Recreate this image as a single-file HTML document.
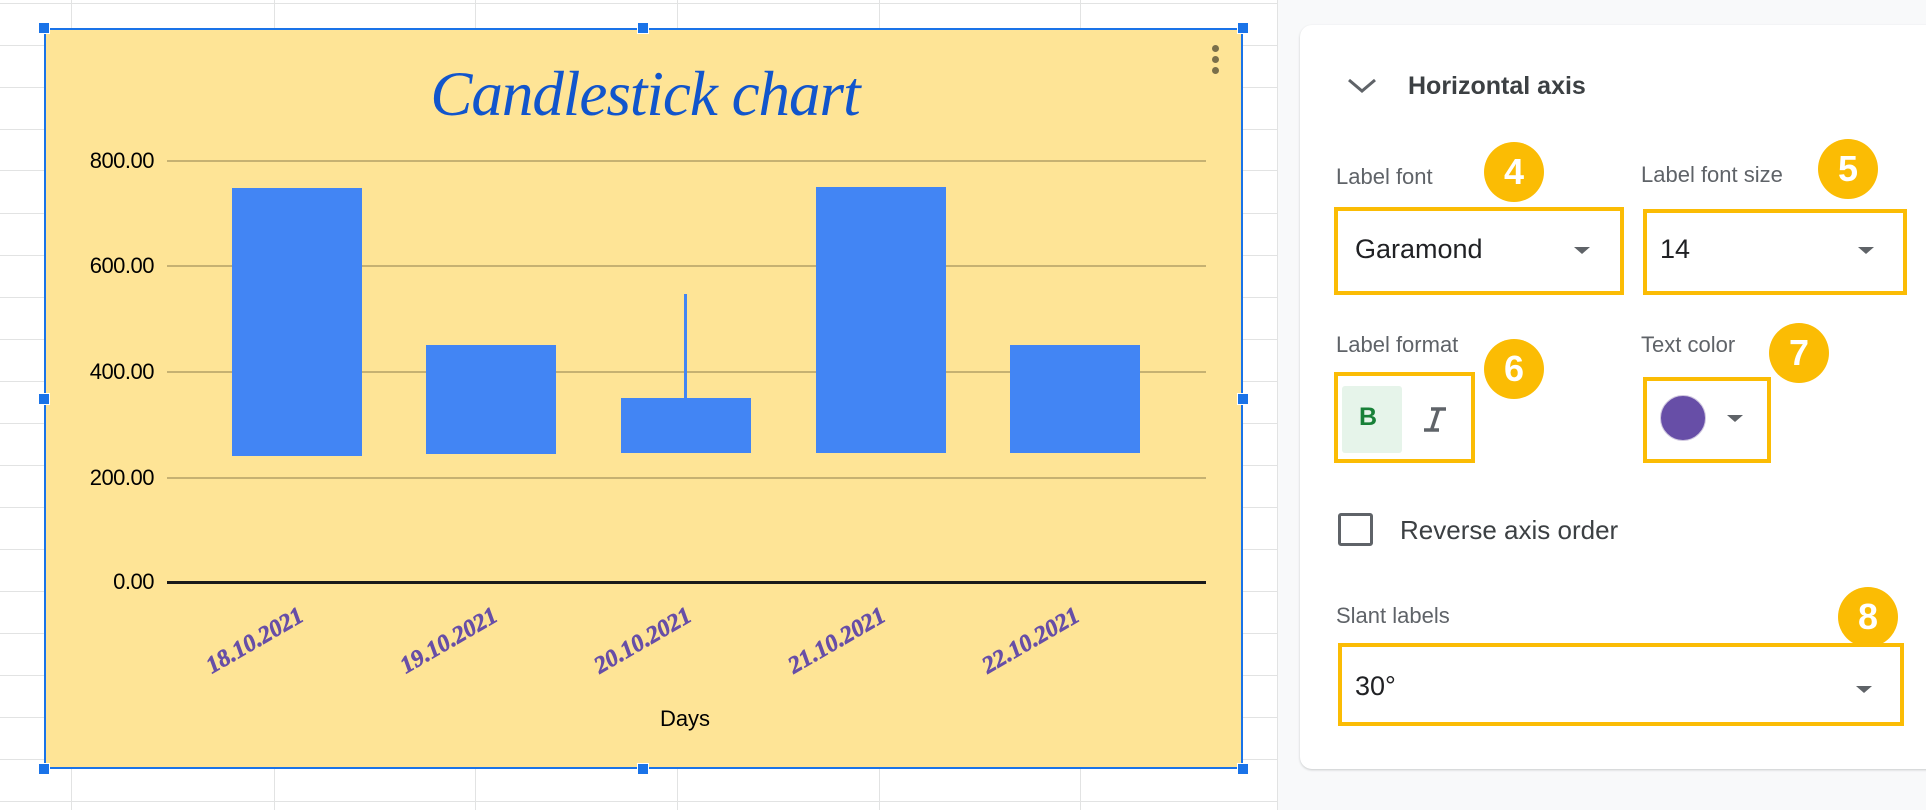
<!DOCTYPE html>
<html><head><meta charset="utf-8"><style>
body{margin:0;width:1926px;height:810px;position:relative;overflow:hidden;background:#fff;font-family:"Liberation Sans",Arial,sans-serif}
.a{position:absolute}
.vl{position:absolute;top:0;width:1px;height:810px;background:#e2e3e3}
.hl{position:absolute;left:0;width:1277px;height:1px;background:#e2e3e3}
.h{position:absolute;width:12px;height:12px;background:#1a73e8;border:1px solid #fff;box-sizing:border-box}
.g{position:absolute;left:167px;width:1039px;height:2px;background:#c6b172}
.yl{position:absolute;width:150px;left:4px;text-align:right;font-size:22px;color:#000;line-height:22px;letter-spacing:-0.5px}
.bar{position:absolute;background:#4285f4}
.xl{position:absolute;width:200px;text-align:center;font:italic 900 24px "Liberation Serif",serif;color:#674ea7;transform:rotate(-30deg);line-height:24px;-webkit-text-stroke:0.6px #674ea7}
.lab{position:absolute;font-size:22px;color:#5f6368}
.badge{position:absolute;width:60px;height:60px;border-radius:50%;background:#fbbc04;color:#fff;font-weight:bold;font-size:36px;text-align:center;line-height:60px}
.box{position:absolute;border:4px solid #fbbc04;box-sizing:border-box;background:#fff}
.arr{position:absolute;width:0;height:0;border-left:8px solid transparent;border-right:8px solid transparent;border-top:7px solid #5f6368}
</style></head><body>
<div class="vl" style="left:71px"></div><div class="vl" style="left:274px"></div><div class="vl" style="left:475px"></div><div class="vl" style="left:677px"></div><div class="vl" style="left:879px"></div><div class="vl" style="left:1080px"></div><div class="vl" style="left:1277px"></div>
<div class="hl" style="top:3px"></div><div class="hl" style="top:45px"></div><div class="hl" style="top:87px"></div><div class="hl" style="top:129px"></div><div class="hl" style="top:170px"></div><div class="hl" style="top:213px"></div><div class="hl" style="top:255px"></div><div class="hl" style="top:297px"></div><div class="hl" style="top:339px"></div><div class="hl" style="top:381px"></div><div class="hl" style="top:423px"></div><div class="hl" style="top:465px"></div><div class="hl" style="top:507px"></div><div class="hl" style="top:549px"></div><div class="hl" style="top:591px"></div><div class="hl" style="top:633px"></div><div class="hl" style="top:675px"></div><div class="hl" style="top:717px"></div><div class="hl" style="top:759px"></div><div class="hl" style="top:801px"></div>
<div class="a" style="left:1278px;top:0;width:648px;height:810px;background:#f8f9fa"></div>
<div class="a" style="left:1300px;top:25px;width:640px;height:744px;background:#fff;border-radius:12px;box-shadow:0 1px 2px rgba(60,64,67,.25)"></div>

<div class="a" style="left:44px;top:28px;width:1199px;height:741px;background:#fee496;border:2px solid #1a73e8;box-sizing:border-box"></div>
<div class="h" style="left:38px;top:22px"></div><div class="h" style="left:637px;top:22px"></div><div class="h" style="left:1237px;top:22px"></div>
<div class="h" style="left:38px;top:393px"></div><div class="h" style="left:1237px;top:393px"></div>
<div class="h" style="left:38px;top:763px"></div><div class="h" style="left:637px;top:763px"></div><div class="h" style="left:1237px;top:763px"></div>
<div class="a" style="left:1212px;top:45px;width:7px;height:7px;border-radius:50%;background:#7a6f4a"></div>
<div class="a" style="left:1212px;top:56px;width:7px;height:7px;border-radius:50%;background:#7a6f4a"></div>
<div class="a" style="left:1212px;top:67px;width:7px;height:7px;border-radius:50%;background:#7a6f4a"></div>

<div class="a" style="left:290px;top:54px;width:710px;text-align:center;font:italic 63px 'Liberation Serif',serif;color:#1155cc;letter-spacing:-1px;line-height:80px">Candlestick chart</div>
<div class="g" style="top:160px"></div><div class="g" style="top:265px"></div><div class="g" style="top:371px"></div><div class="g" style="top:477px"></div>
<div class="a" style="left:167px;top:581px;width:1039px;height:3px;background:#1a1a1a"></div>
<div class="yl" style="top:150px">800.00</div><div class="yl" style="top:255px">600.00</div><div class="yl" style="top:361px">400.00</div><div class="yl" style="top:467px">200.00</div><div class="yl" style="top:571px">0.00</div>
<div class="bar" style="left:232px;top:188px;width:130px;height:268px"></div>
<div class="bar" style="left:426px;top:345px;width:130px;height:109px"></div>
<div class="bar" style="left:684px;top:294px;width:3px;height:106px"></div>
<div class="bar" style="left:621px;top:398px;width:130px;height:55px"></div>
<div class="bar" style="left:816px;top:187px;width:130px;height:266px"></div>
<div class="bar" style="left:1010px;top:345px;width:130px;height:108px"></div>
<div class="xl" style="left:155px;top:629px">18.10.2021</div>
<div class="xl" style="left:349px;top:629px">19.10.2021</div>
<div class="xl" style="left:543px;top:629px">20.10.2021</div>
<div class="xl" style="left:737px;top:629px">21.10.2021</div>
<div class="xl" style="left:931px;top:629px">22.10.2021</div>
<div class="a" style="left:635px;top:706px;width:100px;text-align:center;font-size:22px;color:#000">Days</div>

<svg class="a" style="left:1346px;top:75px" width="32" height="22"><path d="M3 5 L16 16 L29 5" fill="none" stroke="#5f6368" stroke-width="3"/></svg>
<div class="a" style="left:1408px;top:72px;font-size:25px;font-weight:bold;color:#3c4043">Horizontal axis</div>

<div class="lab" style="left:1336px;top:164px">Label font</div>
<div class="badge" style="left:1484px;top:142px">4</div>
<div class="box" style="left:1334px;top:207px;width:290px;height:88px"></div>
<div class="a" style="left:1355px;top:234px;font-size:27px;color:#202124">Garamond</div>
<div class="arr" style="left:1574px;top:247px"></div>

<div class="lab" style="left:1641px;top:162px">Label font size</div>
<div class="badge" style="left:1818px;top:139px">5</div>
<div class="box" style="left:1643px;top:209px;width:264px;height:86px"></div>
<div class="a" style="left:1660px;top:234px;font-size:27px;color:#202124">14</div>
<div class="arr" style="left:1858px;top:247px"></div>

<div class="lab" style="left:1336px;top:332px">Label format</div>
<div class="badge" style="left:1484px;top:339px">6</div>
<div class="box" style="left:1334px;top:372px;width:141px;height:91px"></div>
<div class="a" style="left:1342px;top:386px;width:60px;height:67px;background:#e6f4ea;border-radius:3px"></div>
<div class="a" style="left:1359px;top:403px;font-size:25px;font-weight:bold;color:#188038">B</div>
<svg class="a" style="left:1420px;top:404px" width="30" height="30"><path d="M11 5 H26 M18.5 5 L11.5 26 M4 26 H19" fill="none" stroke="#5f6368" stroke-width="3.5"/></svg>

<div class="lab" style="left:1641px;top:332px">Text color</div>
<div class="badge" style="left:1769px;top:323px">7</div>
<div class="box" style="left:1643px;top:377px;width:128px;height:86px"></div>
<div class="a" style="left:1660px;top:395px;width:44px;height:44px;border-radius:50%;background:#674ea7;border:1px solid #d0c8e0"></div>
<div class="arr" style="left:1727px;top:415px"></div>

<div class="a" style="left:1338px;top:513px;width:35px;height:33px;border:3px solid #5f6368;border-radius:3px;box-sizing:border-box"></div>
<div class="a" style="left:1400px;top:515px;font-size:26px;color:#3c4043">Reverse axis order</div>

<div class="lab" style="left:1336px;top:603px">Slant labels</div>
<div class="box" style="left:1338px;top:643px;width:566px;height:83px"></div>
<div class="badge" style="left:1838px;top:587px">8</div>
<div class="a" style="left:1355px;top:671px;font-size:27px;color:#202124">30°</div>
<div class="arr" style="left:1856px;top:686px"></div>
</body></html>
